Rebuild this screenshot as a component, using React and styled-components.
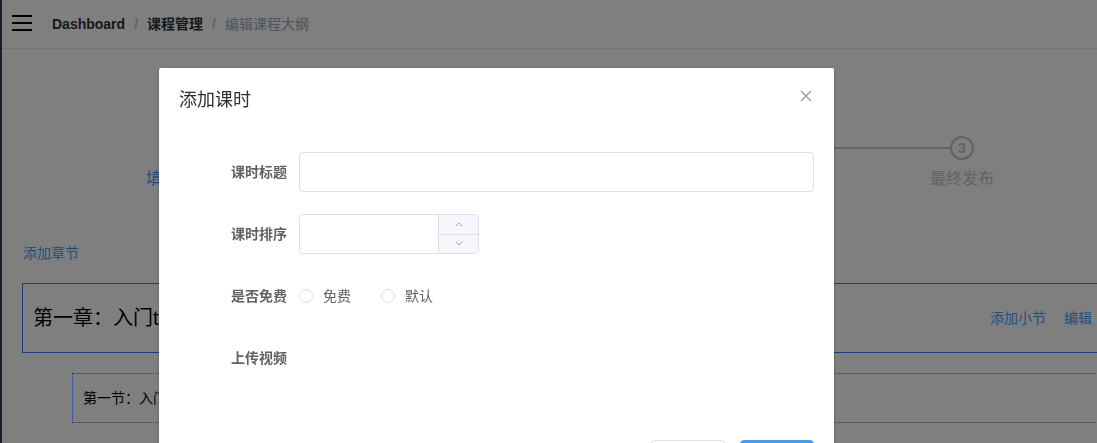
import React from 'react';
import styled, { createGlobalStyle } from 'styled-components';

const font = `"Liberation Sans", "Noto Sans CJK SC", sans-serif`;
const blue = '#409EFF';

const GlobalStyle = createGlobalStyle`
  * { box-sizing: border-box; }
  html, body {
    margin: 0;
    padding: 0;
    width: 1097px;
    height: 443px;
    overflow: hidden;
    background: #fff;
    font-family: ${font};
  }
`;

const Layout = styled.div`
  display: flex;
  width: 1170px;
  height: 443px;
`;

const Sidebar = styled.div`
  width: 2px;
  flex-shrink: 0;
  background: #304156;
`;

const Main = styled.div`
  flex: 1;
  display: flex;
  flex-direction: column;
`;

const Navbar = styled.div`
  height: 49px;
  border-bottom: 1px solid #e6e6e6;
  display: flex;
  align-items: center;
  padding-left: 10px;
`;

const Hamburger = styled.div`
  width: 20px;
  height: 20px;
  margin-right: 20px;
  display: flex;
`;

const Breadcrumb = styled.div`
  display: flex;
  align-items: center;
  font-size: 14px;
  line-height: 48px;
`;

const Crumb = styled.span`
  color: ${(p) => (p.$last ? '#97a8be' : '#303133')};
  font-weight: ${(p) => (p.$last ? 400 : 700)};
`;

const Sep = styled.span`
  margin: 0 9px;
  color: #c0c4cc;
  font-weight: 700;
`;

const Container = styled.div`
  padding: 20px;
`;

const PageTitle = styled.h2`
  margin: 19px 0 20px;
  font-size: 24px;
  line-height: 28px;
  text-align: center;
  color: #000;
`;

const Steps = styled.div`
  display: flex;
  margin-bottom: 35px;
`;

const Step = styled.div`
  flex: 1;
  text-align: center;
  color: ${(p) => (p.$done ? blue : '#c0c4cc')};
`;

const StepHead = styled.div`
  position: relative;
  height: 24px;
  display: flex;
  justify-content: center;
`;

const StepLine = styled.div`
  position: absolute;
  top: 11px;
  left: 50%;
  right: -50%;
  height: 2px;
  background: ${(p) => (p.$done ? blue : '#c0c4cc')};
`;

const StepIcon = styled.div`
  position: relative;
  z-index: 1;
  width: 24px;
  height: 24px;
  border: 2px solid currentColor;
  border-radius: 50%;
  background: #fff;
  display: flex;
  align-items: center;
  justify-content: center;
  font-size: 14px;
  font-weight: 700;
  line-height: 1;
`;

const StepTitle = styled.div`
  font-size: 16px;
  line-height: 38px;
`;

const TextButton = styled.span`
  display: inline-block;
  padding: 12px 0;
  border: 1px solid transparent;
  font-size: 14px;
  line-height: 14px;
  color: ${blue};
  & + & {
    margin-left: 16px;
  }
`;

const ChapterList = styled.div`
  display: flex;
  flex-direction: column;
`;

const ChapterRow = styled.div`
  margin: 10px 0;
  padding: 10px;
  height: 70px;
  border: 1px solid #3c78f0;
  display: flex;
  align-items: center;
  justify-content: space-between;
  font-size: 20px;
  line-height: 48px;
  color: #000;
`;

const Acts = styled.span`
  display: flex;
  align-items: center;
`;

const VideoList = styled.div`
  display: flex;
  flex-direction: column;
  padding-left: 50px;
`;

const VideoRow = styled.div`
  margin: 10px 0;
  padding: 10px;
  height: 50px;
  border: 1px dotted #3c78f0;
  font-size: 14px;
  line-height: 28px;
  color: #000;
`;

const Mask = styled.div`
  position: fixed;
  inset: 0;
  z-index: 10;
  background: rgba(0, 0, 0, 0.5);
`;

const DialogWrapper = styled.div`
  position: fixed;
  inset: 0;
  z-index: 11;
  overflow: hidden;
  padding: 68px 0 0 159px;
`;

const Dialog = styled.div`
  width: 675px;
  background: #fff;
  border-radius: 2px;
  box-shadow: 0 1px 3px rgba(0, 0, 0, 0.3);
`;

const DialogHeader = styled.div`
  padding: 20px 20px 10px;
  display: flex;
  justify-content: space-between;
`;

const DialogTitle = styled.span`
  font-size: 18px;
  line-height: 24px;
  color: #303133;
`;

const Close = styled.span`
  width: 16px;
  height: 16px;
  display: flex;
`;

const DialogBody = styled.div`
  padding: 30px 20px;
`;

const FormItem = styled.div`
  display: flex;
  margin-bottom: 22px;
`;

const Label = styled.label`
  width: 120px;
  flex-shrink: 0;
  padding-right: 12px;
  text-align: right;
  font-size: 14px;
  line-height: 40px;
  font-weight: 700;
  color: #606266;
`;

const Field = styled.div`
  flex: 1;
  min-height: 40px;
  display: flex;
  align-items: center;
`;

const Input = styled.input`
  width: 100%;
  height: 40px;
  padding: 0 15px;
  border: 1px solid #dcdfe6;
  border-radius: 4px;
  font-family: ${font};
  font-size: 14px;
  color: #606266;
  outline: none;
`;

const NumberBox = styled.div`
  width: 180px;
  height: 40px;
  display: flex;
  border: 1px solid #dcdfe6;
  border-radius: 4px;
  overflow: hidden;
`;

const NumberInput = styled.input`
  flex: 1;
  min-width: 0;
  border: none;
  padding: 0 15px;
  font-family: ${font};
  font-size: 14px;
  outline: none;
`;

const Spinner = styled.div`
  width: 40px;
  display: flex;
  flex-direction: column;
  border-left: 1px solid #dcdfe6;
`;

const SpinButton = styled.div`
  flex: 1;
  display: flex;
  align-items: center;
  justify-content: center;
  background: #f5f7fa;
  & + & {
    border-top: 1px solid #dcdfe6;
  }
`;

const Radio = styled.span`
  display: flex;
  align-items: center;
  margin-right: 30px;
`;

const RadioCircle = styled.span`
  width: 14px;
  height: 14px;
  border: 1px solid #dcdfe6;
  border-radius: 50%;
  background: #fff;
`;

const RadioLabel = styled.span`
  padding-left: 10px;
  font-size: 14px;
  line-height: 40px;
  color: #606266;
`;

const DialogFooter = styled.div`
  padding: 10px 20px 20px;
  display: flex;
  justify-content: flex-end;
  gap: 15px;
`;

const Button = styled.button`
  padding: 12px 20px;
  border: 1px solid ${(p) => (p.$primary ? blue : '#dcdfe6')};
  border-radius: 4px;
  background: ${(p) => (p.$primary ? blue : '#fff')};
  color: ${(p) => (p.$primary ? '#fff' : '#606266')};
  font-family: ${font};
  font-size: 14px;
  line-height: 14px;
`;

const Chevron = ({ up }) => (
  <svg width="8" height="5" viewBox="0 0 8 5">
    <path
      d={up ? 'M0.5 4.5 L4 1 L7.5 4.5' : 'M0.5 0.5 L4 4 L7.5 0.5'}
      fill="none"
      stroke="#a8abb2"
      strokeWidth="1"
    />
  </svg>
);

const steps = [
  { title: '填写课程基本信息', done: true },
  { title: '创建课程大纲', done: true },
  { title: '最终发布', done: false },
];

export default function App() {
  return (
    <>
      <GlobalStyle />
      <Layout>
        <Sidebar />
        <Main>
          <Navbar>
            <Hamburger>
              <svg width="20" height="20" viewBox="0 0 20 20">
                <rect x="0" y="1" width="20" height="2" fill="#000" />
                <rect x="0" y="8" width="20" height="2" fill="#000" />
                <rect x="0" y="15" width="20" height="2" fill="#000" />
              </svg>
            </Hamburger>
            <Breadcrumb>
              <Crumb>Dashboard</Crumb>
              <Sep>/</Sep>
              <Crumb>课程管理</Crumb>
              <Sep>/</Sep>
              <Crumb $last>编辑课程大纲</Crumb>
            </Breadcrumb>
          </Navbar>
          <Container>
            <PageTitle>发布新课程</PageTitle>
            <Steps>
              {steps.map((s, i) => (
                <Step key={s.title} $done={s.done}>
                  <StepHead>
                    {i < steps.length - 1 && <StepLine $done={steps[i + 1].done} />}
                    <StepIcon>
                      {s.done ? (
                        <svg width="12" height="12" viewBox="0 0 12 12">
                          <path d="M2 6.5 L5 9 L10 3" fill="none" stroke={blue} strokeWidth="1.6" />
                        </svg>
                      ) : (
                        i + 1
                      )}
                    </StepIcon>
                  </StepHead>
                  <StepTitle>{s.title}</StepTitle>
                </Step>
              ))}
            </Steps>
            <TextButton>添加章节</TextButton>
            <ChapterList>
              <ChapterRow>
                <span>第一章：入门test</span>
                <Acts>
                  <TextButton>添加小节</TextButton>
                  <TextButton>编辑</TextButton>
                  <TextButton>删除</TextButton>
                </Acts>
              </ChapterRow>
              <VideoList>
                <VideoRow>第一节：入门test</VideoRow>
              </VideoList>
            </ChapterList>
          </Container>
        </Main>
      </Layout>

      <Mask />
      <DialogWrapper>
        <Dialog>
          <DialogHeader>
            <DialogTitle>添加课时</DialogTitle>
            <Close>
              <svg width="16" height="16" viewBox="0 0 16 16">
                <path d="M3 3 L13 13 M13 3 L3 13" stroke="#909399" strokeWidth="1.1" />
              </svg>
            </Close>
          </DialogHeader>
          <DialogBody>
            <FormItem>
              <Label>课时标题</Label>
              <Field>
                <Input />
              </Field>
            </FormItem>
            <FormItem>
              <Label>课时排序</Label>
              <Field>
                <NumberBox>
                  <NumberInput />
                  <Spinner>
                    <SpinButton>
                      <Chevron up />
                    </SpinButton>
                    <SpinButton>
                      <Chevron />
                    </SpinButton>
                  </Spinner>
                </NumberBox>
              </Field>
            </FormItem>
            <FormItem>
              <Label>是否免费</Label>
              <Field>
                <Radio>
                  <RadioCircle />
                  <RadioLabel>免费</RadioLabel>
                </Radio>
                <Radio>
                  <RadioCircle />
                  <RadioLabel>默认</RadioLabel>
                </Radio>
              </Field>
            </FormItem>
            <FormItem>
              <Label>上传视频</Label>
              <Field />
            </FormItem>
          </DialogBody>
          <DialogFooter>
            <Button>取 消</Button>
            <Button $primary>确 定</Button>
          </DialogFooter>
        </Dialog>
      </DialogWrapper>
    </>
  );
}
